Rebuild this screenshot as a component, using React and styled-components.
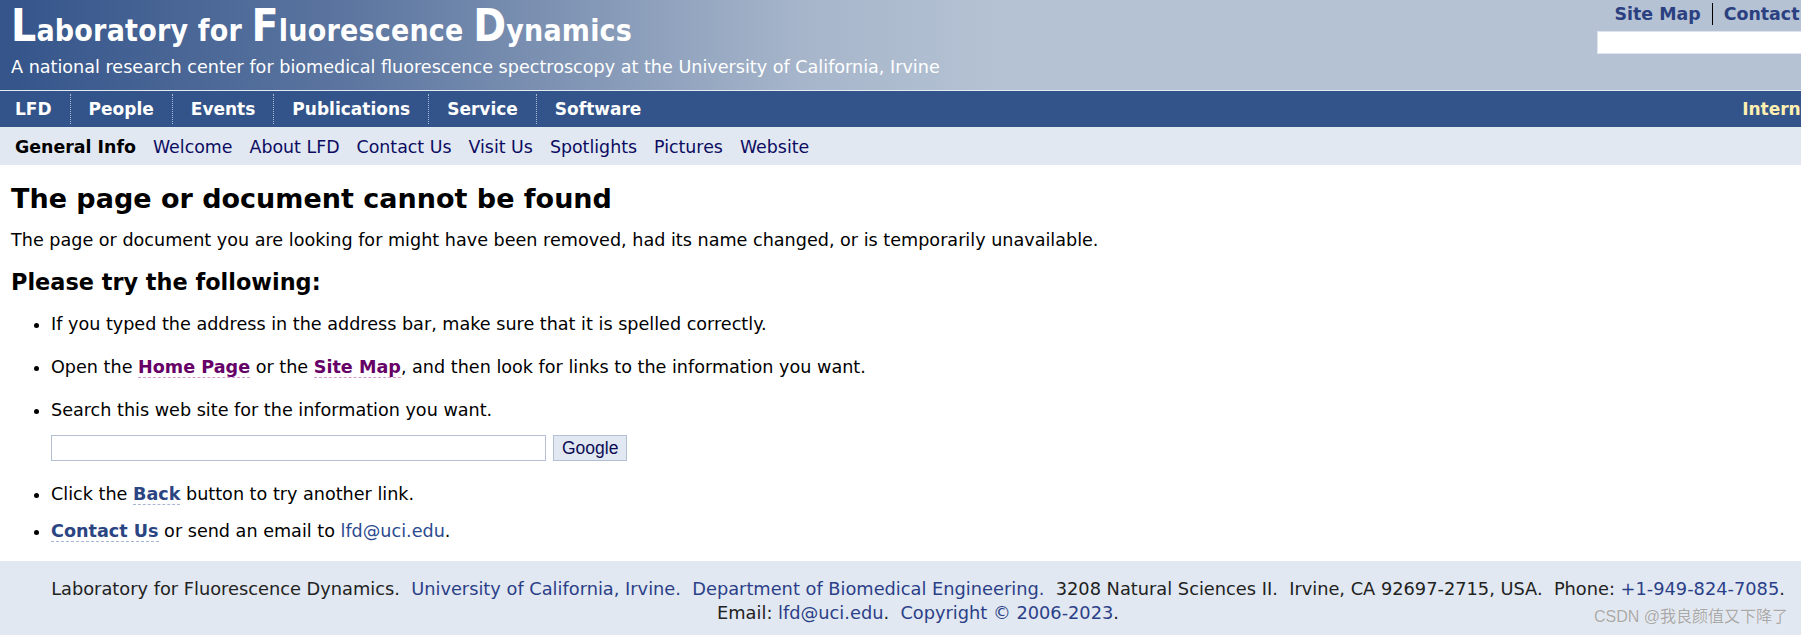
import styled, { createGlobalStyle } from 'styled-components'

const GlobalStyle = createGlobalStyle`
html, body {
  margin: 0;
  padding: 0;
  overflow: hidden;
  background: #fff;
}
body {
  font-family: "DejaVu Sans", Verdana, sans-serif;
  font-size: 17.6px;
  color: #000;
}
`

const Page = styled.div`
width: 1836px;
min-height: 635px;
position: relative;
`

const Header = styled.header`
height: 90px;
display: flex;
justify-content: space-between;
background: linear-gradient(to right, #34548a 0, #5c76a0 350px, #a6b5ca 800px, #b5c2d4 1000px, #b5c2d4 100%);
border-bottom: 1px solid #e4eaf1;
`

const Brand = styled.div`
padding-left: 11px;
color: #fff;
`

const Title = styled.h1`
margin: 0;
padding-top: 2px;
font-family: "DejaVu Sans Condensed", "DejaVu Sans", sans-serif;
font-stretch: semi-condensed;
font-size: 30px;
font-weight: bold;
line-height: 48px;
letter-spacing: 0.2px;
`

const BigLetter = styled.span`
font-size: 44px;
`

const Subtitle = styled.div`
font-size: 17.6px;
line-height: 22px;
margin-top: 1px;
`

const Tools = styled.div`
display: flex;
flex-direction: column;
align-items: flex-end;
padding: 3px 6px 0 0;
`

const ToolLinks = styled.div`
display: flex;
align-items: center;
font-size: 17.4px;
font-weight: bold;
line-height: 22px;
`

const ToolLink = styled.a`
color: #2a4080;
text-decoration: none;
padding: 0 11px;
border-left: ${(p) => (p.$first ? 'none' : '1px solid #000')};
line-height: 22px;
&:last-child { padding-right: 0; }
`

const SearchBox = styled.input`
margin-top: 6px;
width: 233px;
height: 23px;
box-sizing: border-box;
border: 1px solid #dfe5ee;
background: #fff;
`

const NavBar = styled.nav`
height: 36px;
display: flex;
align-items: center;
justify-content: space-between;
background: #32548a;
border-bottom: 1px solid #e4eaf1;
`

const NavList = styled.div`
display: flex;
align-items: center;
`

const NavItem = styled.a`
color: ${(p) => (p.$accent ? '#fff0b0' : '#fff')};
font-size: 17px;
font-weight: bold;
text-decoration: none;
padding: 0 18px;
line-height: 30px;
border-right: ${(p) => (p.$last ? 'none' : '1px dotted #a9b8d0')};
&:first-child { padding-left: 15px; }
`

const SubNav = styled.div`
height: 37px;
display: flex;
align-items: center;
gap: 17px;
padding-left: 15px;
background: #e1e8f1;
font-size: 17.4px;
`

const SubNavItem = styled.a`
color: ${(p) => (p.$current ? '#000' : '#0c0c62')};
font-weight: ${(p) => (p.$current ? 'bold' : 'normal')};
text-decoration: none;
`

const Main = styled.main`
padding: 0 11px;
`

const Heading = styled.h1`
margin: 17px 0 0;
font-size: 27px;
line-height: 34px;
font-weight: bold;
`

const Text = styled.p`
margin: 13px 0 0;
line-height: 22px;
`

const SubHeading = styled.h2`
margin: 18px 0 0;
font-size: 22.4px;
line-height: 26px;
font-weight: bold;
`

const List = styled.ul`
margin: 18px 0 0;
padding-left: 40px;
`

const Item = styled.li`
line-height: 22px;
margin-bottom: ${(p) => p.$space || 21}px;
&:last-child { margin-bottom: 0; }
`

const Strong = styled.a`
font-weight: bold;
text-decoration: none;
color: ${(p) => (p.$visited ? '#660066' : '#2b4582')};
border-bottom: 1px dashed ${(p) => (p.$visited ? '#d49ad4' : '#a9b6d2')};
`

const Plain = styled.a`
color: #2b4a8f;
text-decoration: none;
`

const SearchForm = styled.form`
display: flex;
gap: 7px;
margin-top: 14px;
`

const SearchInput = styled.input`
width: 495px;
height: 26px;
box-sizing: border-box;
border: 1px solid #b3c0d4;
`

const SearchButton = styled.button`
height: 26px;
padding: 0 8px;
box-sizing: border-box;
background: #e1e8f1;
border: 1px solid #b3c0d4;
font-family: "Liberation Sans", Arial, sans-serif;
font-size: 17.5px;
color: #0c0c55;
`

const Footer = styled.footer`
margin-top: 19px;
background: #e1e8f1;
padding: 16px 0 30px;
text-align: center;
color: #222;
font-size: 17.8px;
line-height: 24px;
`

const FootLink = styled.a`
color: #2b3f88;
text-decoration: none;
`

const Watermark = styled.div`
position: absolute;
right: 48px;
top: 603px;
font-family: "Liberation Sans", "Noto Sans CJK SC", sans-serif;
font-size: 16px;
color: #a8a8a8;
text-shadow: 0 0 1px #fff;
white-space: nowrap;
`

const nav = ['LFD', 'People', 'Events', 'Publications', 'Service', 'Software']
const sub = ['Welcome', 'About LFD', 'Contact Us', 'Visit Us', 'Spotlights', 'Pictures', 'Website']

export default function App() {
  return (
    <Page>
      <GlobalStyle />
      <Header>
        <Brand>
          <Title>
            <BigLetter>L</BigLetter>aboratory for <BigLetter>F</BigLetter>luorescence <BigLetter>D</BigLetter>ynamics
          </Title>
          <Subtitle>A national research center for biomedical fluorescence spectroscopy at the University of California, Irvine</Subtitle>
        </Brand>
        <Tools>
          <ToolLinks>
            <ToolLink $first href="#">Site Map</ToolLink>
            <ToolLink href="#">Contact Us</ToolLink>
          </ToolLinks>
          <SearchBox type="text" />
        </Tools>
      </Header>
      <NavBar>
        <NavList>
          {nav.map((n, i) => (
            <NavItem key={n} href="#" $last={i === nav.length - 1}>{n}</NavItem>
          ))}
        </NavList>
        <NavItem href="#" $accent $last>Internal</NavItem>
      </NavBar>
      <SubNav>
        <SubNavItem $current href="#">General Info</SubNavItem>
        {sub.map((s) => (
          <SubNavItem key={s} href="#">{s}</SubNavItem>
        ))}
      </SubNav>
      <Main>
        <Heading>The page or document cannot be found</Heading>
        <Text>The page or document you are looking for might have been removed, had its name changed, or is temporarily unavailable.</Text>
        <SubHeading>Please try the following:</SubHeading>
        <List>
          <Item>If you typed the address in the address bar, make sure that it is spelled correctly.</Item>
          <Item>Open the <Strong $visited href="#">Home Page</Strong> or the <Strong $visited href="#">Site Map</Strong>, and then look for links to the information you want.</Item>
          <Item $space={22}>
            Search this web site for the information you want.
            <SearchForm onSubmit={(e) => e.preventDefault()}>
              <SearchInput type="text" />
              <SearchButton type="submit">Google</SearchButton>
            </SearchForm>
          </Item>
          <Item $space={15}>Click the <Strong href="#">Back</Strong> button to try another link.</Item>
          <Item><Strong href="#">Contact Us</Strong> or send an email to <Plain href="#">lfd@uci.edu</Plain>.</Item>
        </List>
      </Main>
      <Footer>
        <div>
          Laboratory for Fluorescence Dynamics.&nbsp; <FootLink href="#">University of California, Irvine.</FootLink>&nbsp; <FootLink href="#">Department of Biomedical Engineering.</FootLink>&nbsp; 3208 Natural Sciences II.&nbsp; Irvine, CA 92697-2715, USA.&nbsp; Phone: <FootLink href="#">+1-949-824-7085</FootLink>.
        </div>
        <div>
          Email: <FootLink href="#">lfd@uci.edu</FootLink>.&nbsp; <FootLink href="#">Copyright © 2006-2023</FootLink>.
        </div>
      </Footer>
      <Watermark>CSDN @我良颜值又下降了</Watermark>
    </Page>
  )
}
